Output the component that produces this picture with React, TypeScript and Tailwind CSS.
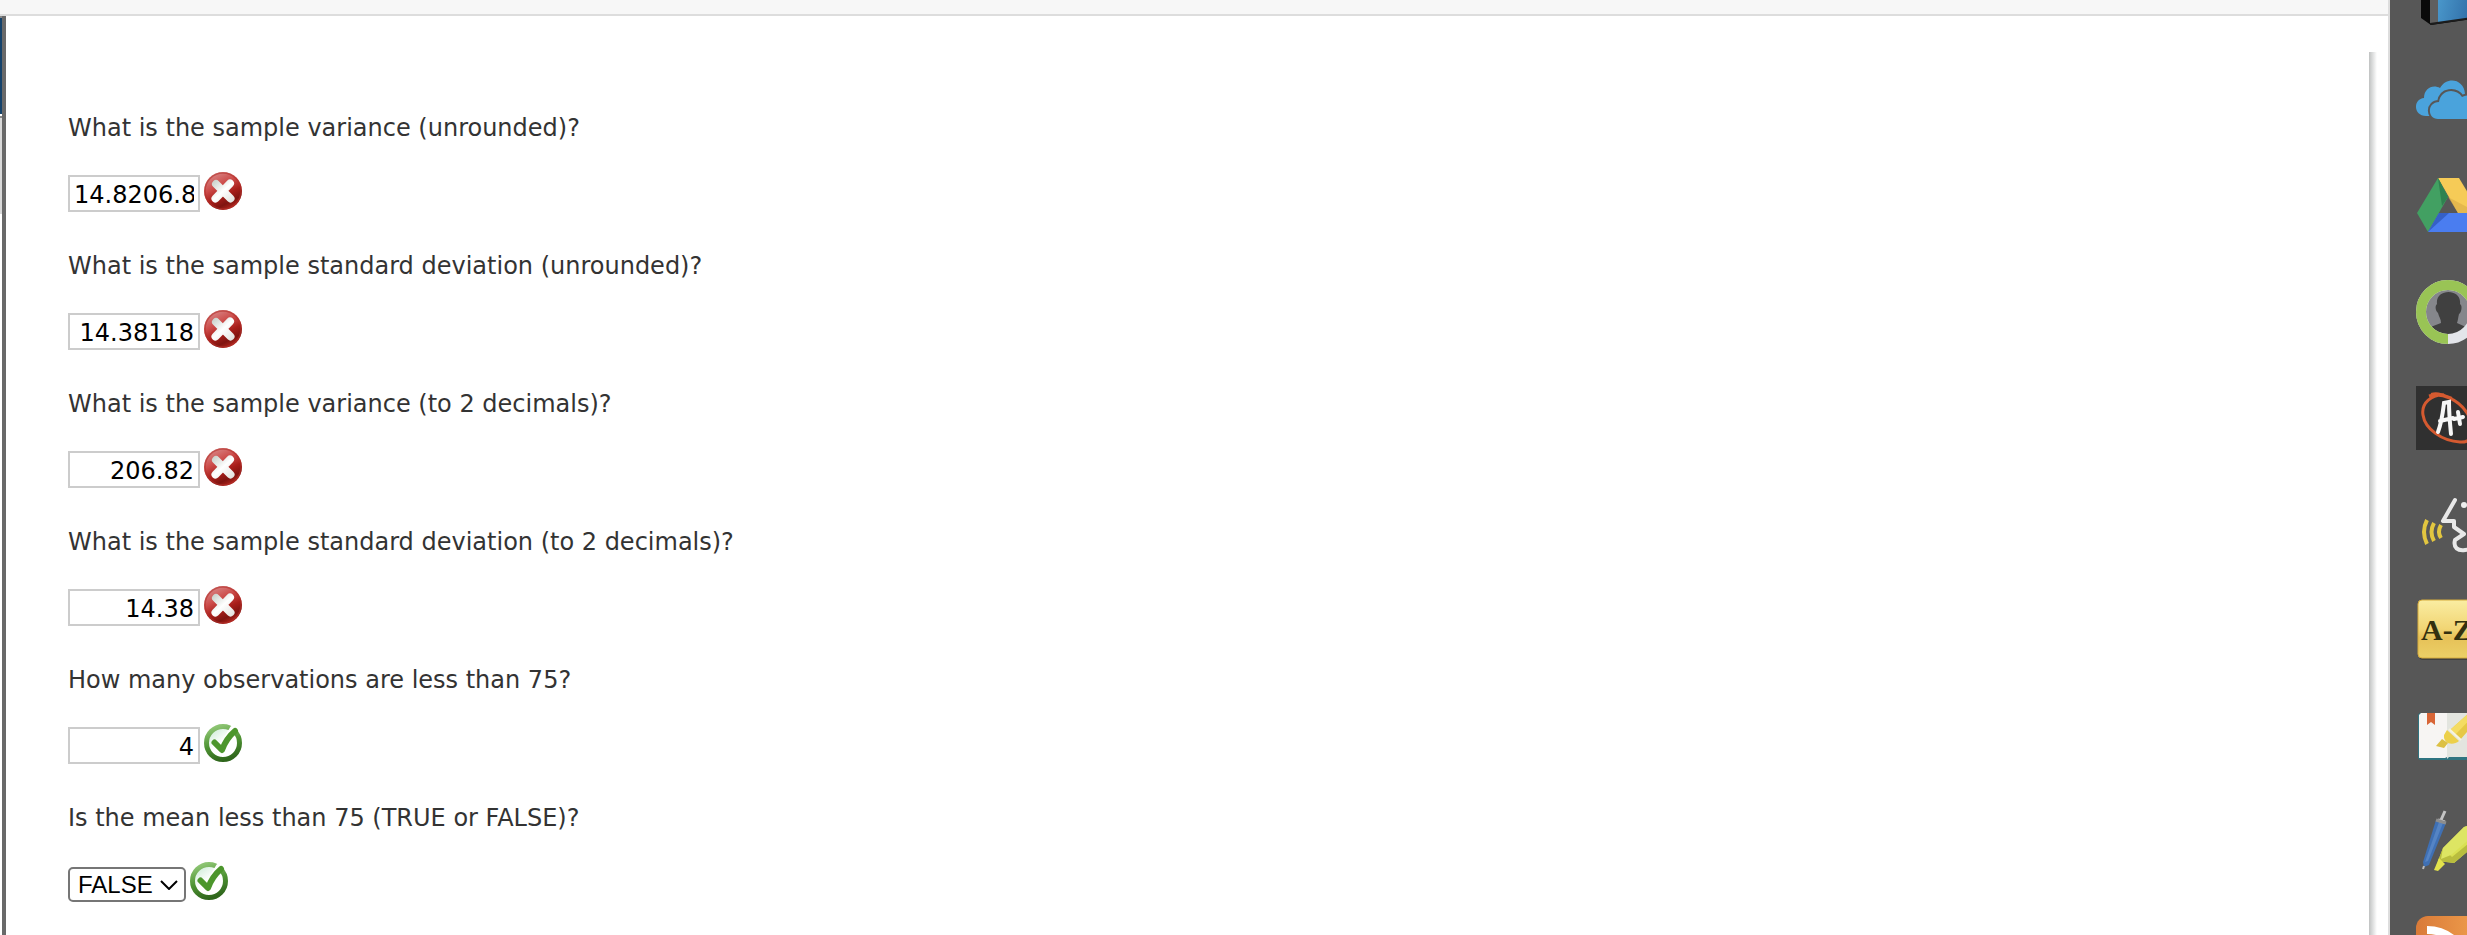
import React from "react";

interface Question {
  id: string;
  text: string;
  answer: string;
  correct: boolean;
  options?: string[];
}

const questions: Question[] = [
  { id: "variance", text: "What is the sample variance (unrounded)?", answer: "14.8206.82", correct: false },
  { id: "deviation", text: "What is the sample standard deviation (unrounded)?", answer: "14.38118", correct: false },
  { id: "variance-2", text: "What is the sample variance (to 2 decimals)?", answer: "206.82", correct: false },
  { id: "deviation-2", text: "What is the sample standard deviation (to 2 decimals)?", answer: "14.38", correct: false },
  { id: "observations", text: "How many observations are less than 75?", answer: "4", correct: true },
  {
    id: "mean",
    text: "Is the mean less than 75 (TRUE or FALSE)?",
    answer: "FALSE",
    correct: true,
    options: ["TRUE", "FALSE"],
  },
];

const WrongIcon = () => (
  <svg viewBox="0 0 38 38" className="h-[38px] w-[38px] shrink-0 self-start" role="img" aria-label="Incorrect">
    <defs>
      <linearGradient id="wrong-ball" x1="0.25" y1="0" x2="0.75" y2="1">
        <stop offset="0" stopColor="#d98a8a" />
        <stop offset="0.35" stopColor="#cc4a48" />
        <stop offset="0.6" stopColor="#a81e1a" />
        <stop offset="0.8" stopColor="#7f1410" />
        <stop offset="1" stopColor="#c22a20" />
      </linearGradient>
      <linearGradient id="wrong-cross" gradientUnits="userSpaceOnUse" x1="9" y1="8" x2="29" y2="30">
        <stop offset="0" stopColor="#c6cfc8" />
        <stop offset="0.5" stopColor="#ffffff" />
        <stop offset="1" stopColor="#e2e2de" />
      </linearGradient>
    </defs>
    <circle cx="19" cy="19" r="19" fill="url(#wrong-ball)" />
    <circle cx="19" cy="19" r="18" fill="none" stroke="#b3302b" strokeWidth="1.5" opacity="0.6" />
    <path d="M12 12 L26.5 26.5 M26 11.500 L11.500 26.500" fill="none" stroke="url(#wrong-cross)" strokeWidth="8" strokeLinecap="round" />
  </svg>
);

const RightIcon = () => (
  <svg viewBox="0 0 38 38" className="h-[38px] w-[38px] shrink-0 self-start" role="img" aria-label="Correct">
    <defs>
      <linearGradient id="right-ring" x1="0.3" y1="0" x2="0.6" y2="1">
        <stop offset="0" stopColor="#8cc472" />
        <stop offset="0.5" stopColor="#4f9434" />
        <stop offset="1" stopColor="#2f661c" />
      </linearGradient>
      <linearGradient id="right-fill" x1="0.1" y1="0" x2="0.7" y2="0.8">
        <stop offset="0" stopColor="#c4e8d0" />
        <stop offset="0.6" stopColor="#ffffff" />
      </linearGradient>
    </defs>
    <circle cx="19" cy="19" r="16.500" fill="url(#right-fill)" stroke="url(#right-ring)" strokeWidth="5" />
    <path d="M22 14 L28 4 L34 1" fill="none" stroke="#ffffff" strokeWidth="4" />
    <path d="M10.500 18.500 L18 26 C21 18 25 12 31 7" fill="none" stroke="#4c962c" strokeWidth="6" strokeLinecap="round" strokeLinejoin="round" />
  </svg>
);

const QuestionItem: React.FC<{ question: Question }> = ({ question }) => (
  <div className="flex flex-col gap-[26px]">
    <label htmlFor={question.id} className="text-2xl leading-9 text-[#333333]">
      {question.text}
    </label>
    <div className="flex h-10 items-end gap-1">
      {question.options ? (
        <div className="relative">
          <select
            id={question.id}
            defaultValue={question.answer}
            className="block h-[35px] w-[118px] appearance-none rounded-[5px] border-2 border-[#767676] bg-white pl-2 font-['Liberation_Sans',Arial,sans-serif] text-2xl leading-7 text-black"
          >
            {question.options.map((option) => (
              <option key={option}>{option}</option>
            ))}
          </select>
          <svg
            viewBox="0 0 18 10"
            className="pointer-events-none absolute top-[13px] right-2 h-2.5 w-[18px]"
            aria-hidden
          >
            <path d="M1 1 L9 9 L17 1" fill="none" stroke="#000000" strokeWidth="2" />
          </svg>
        </div>
      ) : (
        <input
          id={question.id}
          type="text"
          defaultValue={question.answer}
          className="h-[37px] w-[132px] border-2 border-[#cccccc] bg-white px-1 pt-0.5 text-right text-2xl leading-7 text-black"
        />
      )}
      {question.correct ? <RightIcon /> : <WrongIcon />}
    </div>
  </div>
);

// Sidebar drawings share a 64x64 box; the right part of each one runs out of the window.
const tools: { label: string; art: React.ReactNode }[] = [
  {
    label: "Book",
    art: (
      <>
        <defs>
          <linearGradient id="book-cover" x1="0" y1="0" x2="1" y2="0.3">
            <stop offset="0" stopColor="#4fa0d2" />
            <stop offset="1" stopColor="#2f6ca6" />
          </linearGradient>
        </defs>
        <path d="M5 0 H17 L64 56 L15 63 L5 56 Z" fill="#0a0a0a" />
        <path d="M14 0 H23 V61 L14 62 Z" fill="#5f5f5f" />
        <path d="M22 0 H64 V55 L22 61 Z" fill="url(#book-cover)" />
        <path d="M14 62 L64 55" stroke="#1c1c1c" strokeWidth="2" />
      </>
    ),
  },
  {
    label: "Cloud storage",
    art: (
      <>
        <path
          d="M10 48 C-3 48 -3 31 8 30 C8 20 17 16 24 20 C31 8 48 11 49 26 V48 Z"
          fill="#4aa3dc"
        />
        <path
          d="M22 51 C11 51 11 34 23 34 C25 21 40 20 46 29 C54 25 62 30 62 37 C70 38 68 51 60 51 Z"
          fill="#4aa3dc"
          stroke="#575757"
          strokeWidth="4"
          paintOrder="stroke"
        />
      </>
    ),
  },
  {
    label: "Drive",
    art: (
      <>
        <path d="M22 4 H43 L64 39 H42 Z" fill="#f6cb57" />
        <path d="M32 23 L42 39 H64 L53 34 Z" fill="#d9ac48" opacity="0.6" />
        <path d="M22 4 L32 23 L12 58 L1 39 Z" fill="#42a062" />
        <path d="M22 4 L32 23 L26 32 Z" fill="#2f8250" />
        <path d="M23 39 H64 L53 58 H12 Z" fill="#4a7df0" />
        <path d="M12 58 L23 39 H33 Z" fill="#3560c6" />
      </>
    ),
  },
  {
    label: "Profile",
    art: (
      <>
        <circle cx="32" cy="32" r="26" fill="#85868b" />
        <path
          d="M21 24 C19 8 46 8 44 24 C47 26 45 33 43 34 C42 38 42 40 41 43 L52 48 C46 58 18 58 12 48 L25 43 C25 39 23 37 22 33 C19 30 19 26 21 24 Z"
          fill="#404040"
        />
        <circle cx="32" cy="32" r="27" fill="none" stroke="#e3e5ea" strokeWidth="10" />
        <path d="M32 59 A27 27 0 1 1 59 32" fill="none" stroke="#99c455" strokeWidth="10" />
      </>
    ),
  },
  {
    label: "Grades",
    art: (
      <>
        <rect width="64" height="64" fill="#303030" />
        <path
          d="M13 10 C26 6 43 14 51 27 C62 45 56 57 44 56 C26 55 9 43 7 29 C5 17 16 8 28 9"
          fill="none"
          stroke="#d55a30"
          strokeWidth="3"
        />
        <path d="M15 8 C22 6 29 9 36 12" fill="none" stroke="#d55a30" strokeWidth="2" />
        <path d="M22 46 C26 35 27 25 28 17 L33 16 C33 28 34 38 35 48 M24 35 L37 32" fill="none" stroke="#f7f7f7" strokeWidth="4" strokeLinecap="round" />
        <path d="M38 33 L47 31 M42 26 L44 38" fill="none" stroke="#f7f7f7" strokeWidth="4" strokeLinecap="round" />
      </>
    ),
  },
  {
    label: "Read aloud",
    art: (
      <>
        <path
          d="M39 8 L27 29 H38 L38 35 L48 42 L39 48 C37 56 42 59 49 58 L60 57"
          fill="none"
          stroke="#e8e8e8"
          strokeWidth="4"
          strokeLinejoin="round"
          strokeLinecap="round"
        />
        <circle cx="48" cy="13" r="3" fill="#eeeeee" />
        <path d="M11 28 Q5 40 11 52 M18 31 Q13 40 18 49 M25 33 Q21 40 25 46" fill="none" stroke="#e2c640" strokeWidth="4" />
      </>
    ),
  },
  {
    label: "Dictionary",
    art: (
      <>
        <defs>
          <linearGradient id="dict-key" x1="0" y1="0" x2="0" y2="1">
            <stop offset="0" stopColor="#faeda2" />
            <stop offset="0.5" stopColor="#f1d574" />
            <stop offset="0.65" stopColor="#e6c158" />
            <stop offset="1" stopColor="#ecd067" />
          </linearGradient>
        </defs>
        <rect x="3" y="4" width="70" height="58" rx="4" fill="#3f3f3f" />
        <rect x="2" y="2" width="70" height="58" rx="4" fill="url(#dict-key)" stroke="#d6ac3c" />
        <text x="5" y="42" fontFamily="Liberation Serif, serif" fontWeight="700" fontSize="30" fill="#33300f">
          A-Z
        </text>
      </>
    ),
  },
  {
    label: "Notebook",
    art: (
      <>
        <rect x="2" y="9" width="70" height="47" rx="3" fill="#2f7480" />
        <path d="M5 9 H31 V53 L29 54 H3 V11 Z" fill="#f7f5f3" />
        <path d="M31 9 H64 V53 H33 L31 55 Z" fill="#e3e5df" />
        <path d="M11 9 H19 V21 L15 18 L11 21 Z" fill="#d86536" />
        <path d="M64 0 V13 L44 36 L34 26 L53 9 Z" fill="#e6c846" />
        <path d="M64 0 V5 L39 31 L34 26 L53 9 Z" fill="#f4dc62" />
        <path d="M31 26 L43 37 C37 42 27 40 28 31 Z" fill="#ecd04a" />
        <path d="M33 25 L45 36" stroke="#f6f4e0" strokeWidth="2" />
        <path d="M26 35 L32 39 L28 44 L20 42 Z" fill="#dcc044" />
      </>
    ),
  },
  {
    label: "Annotate",
    art: (
      <>
        <path d="M20 10 L30 13 L13 55 L8 57 L7 52 Z" fill="#3f70b4" />
        <path d="M23 12 L27 13 L12 51 L9 52 Z" fill="#5584c4" />
        <path d="M22 10 L29 12 M25 10 L29 1" stroke="#c4c4c4" strokeWidth="3" />
        <path d="M20 10 L30 13" stroke="#8d8d8d" strokeWidth="3" />
        <path d="M8 56 L7 59" stroke="#bdbdbd" strokeWidth="2" />
        <path d="M48 17 L64 12 V31 L38 53 L22 51 L27 38 Z" fill="#d9e052" />
        <path d="M27 38 L36 47 L64 24 V31 L38 53 L22 51 Z" fill="#b9bd3e" />
        <path d="M27 38 L48 17 L64 12 V20 L35 45 L25 49 Z" fill="#dde563" />
        <path d="M23 48 L29 54 L22 61 L18 60 Z" fill="#e3e34c" />
      </>
    ),
  },
  {
    label: "Feed",
    art: (
      <>
        <defs>
          <linearGradient id="feed-tile" x1="0" y1="0" x2="1" y2="0">
            <stop offset="0" stopColor="#d97a38" />
            <stop offset="1" stopColor="#f2a24e" />
          </linearGradient>
        </defs>
        <rect width="72" height="64" rx="12" fill="url(#feed-tile)" />
        <path d="M11 14 C34 14 51 32 51 55" fill="none" stroke="#ffffff" strokeWidth="8" />
      </>
    ),
  },
];

const ToolSidebar = () => (
  <nav
    aria-label="Tools"
    className="w-[79px] shrink-0 overflow-hidden border-l-2 border-[#dddddd] bg-[#575757] pl-[26px]"
  >
    <div className="-mt-[38px] flex w-16 flex-col gap-[42px]">
      {tools.map((tool) => (
        <button key={tool.label} type="button" aria-label={tool.label} className="block h-16 w-16">
          <svg viewBox="0 0 64 64" className="h-16 w-16">
            {tool.art}
          </svg>
        </button>
      ))}
    </div>
  </nav>
);

// Sliver of the collapsed panel left of the content, with its divider
const LeftEdge = () => (
  <div className="flex w-1.5 shrink-0">
    <div className="w-0.5">
      <div className="h-0.5 bg-[#888888]" />
      <div className="h-24 bg-[#15426a]" />
      <div className="mt-0.5 h-0.5 bg-[#888888]" />
      <div className="h-24 bg-[#d9d9d9]" />
    </div>
    <div className="w-1 bg-[#696969]" />
  </div>
);

export default function App() {
  return (
    <div className="flex h-screen overflow-hidden bg-white font-['DejaVu_Sans',Verdana,sans-serif]">
      <div className="flex min-w-0 flex-1 flex-col">
        <header className="h-4 shrink-0 border-b-2 border-[#dddddd] bg-[#f7f7f7]" />
        <div className="flex min-h-0 flex-1">
          <LeftEdge />
          <main className="flex flex-1 flex-col gap-9 pt-[94px] pl-[62px]">
            {questions.map((question) => (
              <QuestionItem key={question.id} question={question} />
            ))}
          </main>
          <div className="mt-9 mr-[11px] w-2 shrink-0 bg-linear-to-r from-[#c0c2c2] to-white" />
        </div>
      </div>
      <ToolSidebar />
    </div>
  );
}
